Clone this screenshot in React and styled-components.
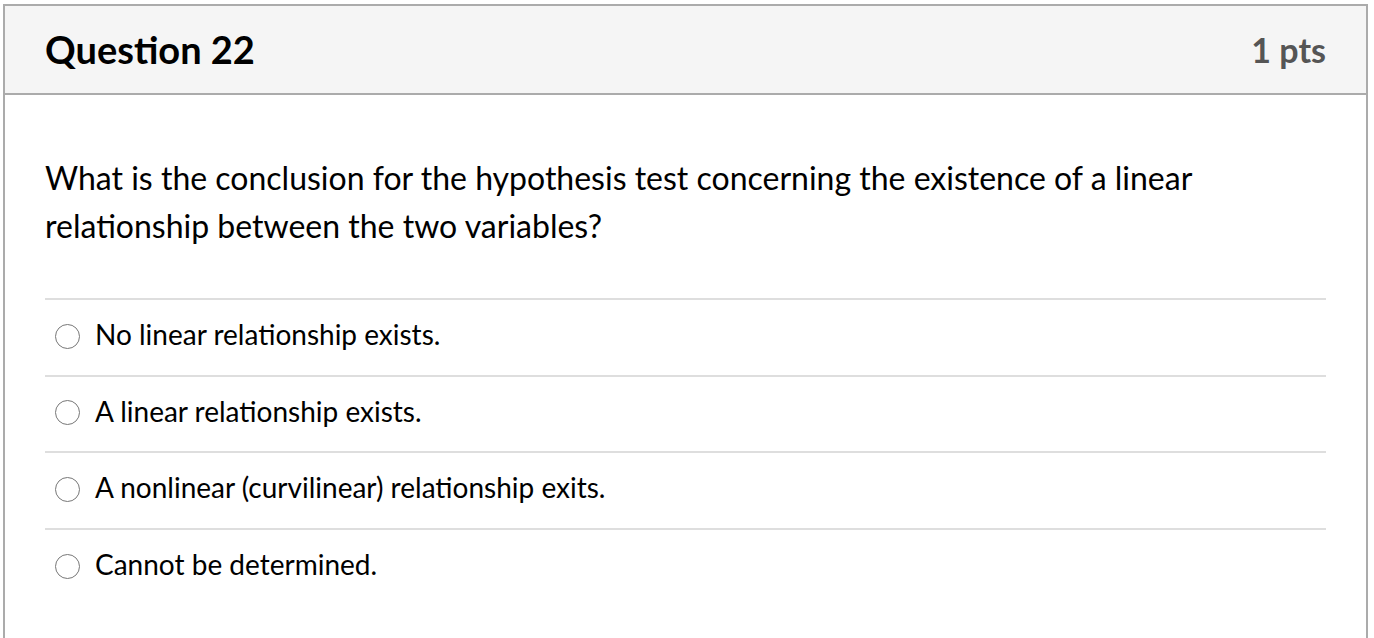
import React from "react";
import styled, { createGlobalStyle } from "styled-components";

const GlobalStyle = createGlobalStyle`
  html, body {
    margin: 0;
    padding: 0;
    background: #fff;
  }
  body {
    font-family: Lato, "Liberation Sans", sans-serif;
    color: #000;
  }
`;

const Page = styled.div`
  padding: 4px 6px 0 3px;
  height: 634px;
  overflow: hidden;
`;

const Card = styled.div`
  border: 2px solid #ababab;
  border-bottom: none;
  height: 100%;
  box-sizing: border-box;
`;

const Header = styled.div`
  display: flex;
  align-items: center;
  justify-content: space-between;
  height: 87px;
  padding: 0 40px;
  background: #f5f5f5;
  border-bottom: 2px solid #ababab;
`;

const Title = styled.h2`
  margin: 0;
  font-size: 38px;
  font-weight: 700;
  line-height: 1.2;
  color: #000;
`;

const Points = styled.span`
  font-size: 34px;
  font-weight: 700;
  color: #555;
`;

const Body = styled.div`
  padding: 59px 40px 0;
`;

const QuestionText = styled.p`
  margin: 0 0 48px;
  max-width: 1240px;
  font-size: 32px;
  line-height: 48px;
`;

const AnswerList = styled.div`
  display: flex;
  flex-direction: column;
`;

const Answer = styled.label`
  display: flex;
  align-items: center;
  gap: 15px;
  padding: 18px 0 23px 10px;
  border-top: 2px solid #dedede;
  font-size: 28px;
  line-height: 1.2;
`;

const Radio = styled.span`
  flex: none;
  width: 23px;
  height: 23px;
  margin-top: 3px;
  border-radius: 50%;
  border: 1.5px solid #777;
  background: #fff;
`;

const answers = [
  "No linear relationship exists.",
  "A linear relationship exists.",
  "A nonlinear (curvilinear) relationship exits.",
  "Cannot be determined.",
];

export default function App() {
  return (
    <>
      <GlobalStyle />
      <Page>
        <Card>
          <Header>
            <Title>Question 22</Title>
            <Points>1 pts</Points>
          </Header>
          <Body>
            <QuestionText>
              What is the conclusion for the hypothesis test concerning the existence of a linear
              relationship between the two variables?
            </QuestionText>
            <AnswerList>
              {answers.map((a) => (
                <Answer key={a}>
                  <Radio />
                  {a}
                </Answer>
              ))}
            </AnswerList>
          </Body>
        </Card>
      </Page>
    </>
  );
}
